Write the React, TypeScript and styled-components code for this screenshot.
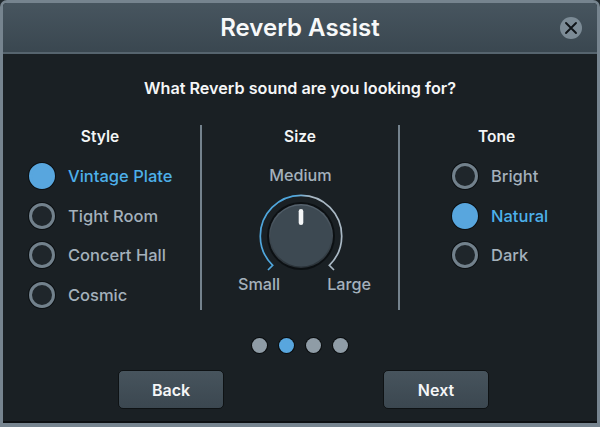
import { FC } from "react";
import styled, { createGlobalStyle } from "styled-components";

const STYLE_OPTIONS = ["Vintage Plate", "Tight Room", "Concert Hall", "Cosmic"];
const TONE_OPTIONS = ["Bright", "Natural", "Dark"];
const STEPS = [false, true, false, false];

const GlobalStyle = createGlobalStyle`
  html, body {
    margin: 0;
    padding: 0;
    background: #20282d;
  }
  body {
    font-family: Inter, "Liberation Sans", sans-serif;
  }
`;

const App = () => (
  <>
    <GlobalStyle />
    <Dialog>
      <Header>
        <Title>Reverb Assist</Title>
        <CloseButton aria-label="Close">
          <svg width="14" height="14" viewBox="0 0 14 14">
            <path d="M2 2 L12 12 M12 2 L2 12" stroke="#0f1418" strokeWidth="1.9" strokeLinecap="round" />
          </svg>
        </CloseButton>
      </Header>
      <Body>
        <Question>What Reverb sound are you looking for?</Question>
        <Columns>
          <div>
            <ColumnTitle $inset={3}>Style</ColumnTitle>
            <OptionList options={STYLE_OPTIONS} selected="Vintage Plate" indent={26} />
          </div>
          <CenterColumn>
            <ColumnTitle $inset={0}>Size</ColumnTitle>
            <MediumLabel>Medium</MediumLabel>
            <Knob />
            <KnobLabels>
              <SizeLabel>Small</SizeLabel>
              <SizeLabel>Large</SizeLabel>
            </KnobLabels>
          </CenterColumn>
          <div>
            <ColumnTitle $inset={4}>Tone</ColumnTitle>
            <OptionList options={TONE_OPTIONS} selected="Natural" indent={52} />
          </div>
        </Columns>
        <Dots>
          {STEPS.map((active, i) => (
            <Dot key={i} $active={active} />
          ))}
        </Dots>
        <Footer>
          <NavButton>Back</NavButton>
          <NavButton>Next</NavButton>
        </Footer>
      </Body>
    </Dialog>
  </>
);

interface OptionListProps {
  options: string[];
  selected: string;
  indent: number;
}

const OptionList: FC<OptionListProps> = ({ options, selected, indent }) => (
  <Options $indent={indent}>
    {options.map((option) => (
      <Option key={option}>
        <Radio $checked={option === selected} />
        <OptionLabel $checked={option === selected}>{option}</OptionLabel>
      </Option>
    ))}
  </Options>
);

const Knob = () => (
  <KnobDrawing width="100" height="91" viewBox="0 0 100 91">
    <defs>
      <linearGradient id="arcStroke" gradientUnits="userSpaceOnUse" x1="9" y1="0" x2="91" y2="0">
        <stop offset="0" stopColor="#4fa6dc" />
        <stop offset="0.42" stopColor="#4fa6dc" />
        <stop offset="0.62" stopColor="#a9b8c4" />
        <stop offset="1" stopColor="#a9b8c4" />
      </linearGradient>
      <linearGradient id="knobEdge" x1="0" y1="0" x2="0" y2="1">
        <stop offset="0" stopColor="#56636e" />
        <stop offset="1" stopColor="#2a3238" />
      </linearGradient>
    </defs>
    <path
      d="M17 84 L21.7 79.3 A40.7 40.7 0 1 1 78.3 79.3 L83 84"
      fill="none"
      stroke="url(#arcStroke)"
      strokeWidth="1.7"
    />
    <circle cx="50" cy="50" r="34" fill="#0c1013" />
    <circle cx="50" cy="50" r="32" fill="url(#knobEdge)" />
    <circle cx="50" cy="50" r="30.5" fill="#3d4952" />
    <rect x="47.7" y="23" width="4.6" height="16" rx="2.3" fill="#f4f6f7" />
  </KnobDrawing>
);

const Dialog = styled.div`
  width: 600px;
  height: 427px;
  box-sizing: border-box;
  display: flex;
  flex-direction: column;
  border: 3px solid #76848f;
  border-bottom-width: 4px;
  border-radius: 7px 7px 0 0;
  background: #1a2024;
  overflow: hidden;
`;

const Header = styled.header`
  position: relative;
  height: 51px;
  flex-shrink: 0;
  display: flex;
  align-items: center;
  justify-content: center;
  box-sizing: border-box;
  background: linear-gradient(#47555f, #3a4750);
  border-bottom: 2px solid #56646e;
`;

const Title = styled.h1`
  margin: 0;
  color: #f7f8f9;
  font-size: 24px;
  font-weight: 600;
  line-height: 1;
`;

const CloseButton = styled.button`
  position: absolute;
  top: 14px;
  right: 15px;
  width: 22px;
  height: 22px;
  padding: 0;
  display: flex;
  align-items: center;
  justify-content: center;
  border: none;
  border-radius: 50%;
  background: #7c8b96;
`;

const Body = styled.main`
  flex: 1;
  display: flex;
  flex-direction: column;
  padding-top: 25px;
  border-bottom: 2px solid #0c0f11;
`;

const Question = styled.p`
  margin: 0;
  height: 18px;
  line-height: 18px;
  text-align: center;
  color: #f5f6f7;
  font-size: 16.2px;
  font-weight: 600;
`;

const Columns = styled.section`
  margin-top: 28px;
  height: 185px;
  display: grid;
  grid-template-columns: 197px 200px 1fr;
`;

const CenterColumn = styled.div`
  display: flex;
  flex-direction: column;
  align-items: center;
  border-left: 2px solid #74828d;
  border-right: 2px solid #74828d;
`;

const ColumnTitle = styled.h2<{ $inset: number }>`
  margin: 3px 0 0;
  padding-right: ${({ $inset }) => $inset}px;
  height: 18px;
  line-height: 18px;
  color: #f3f5f6;
  font-size: 15.5px;
  font-weight: 600;
  text-align: center;
`;

const Options = styled.ul<{ $indent: number }>`
  list-style: none;
  margin: 17px 0 0;
  padding: 0 0 0 ${({ $indent }) => $indent}px;
  display: flex;
  flex-direction: column;
  gap: 13.7px;
`;

const Option = styled.li`
  display: flex;
  align-items: center;
  gap: 13px;
  height: 26px;
`;

const Radio = styled.span<{ $checked: boolean }>`
  width: 26px;
  height: 26px;
  box-sizing: border-box;
  flex-shrink: 0;
  border-radius: 50%;
  border: 3px solid ${({ $checked }) => ($checked ? "#58a6de" : "#72818c")};
  background: ${({ $checked }) => ($checked ? "#58a6de" : "#1f262b")};
  box-shadow: 0 0 0 1px #0c1013;
`;

const OptionLabel = styled.span<{ $checked: boolean }>`
  color: ${({ $checked }) => ($checked ? "#4db0ea" : "#a4b1bc")};
  font-size: 16.5px;
  font-weight: 500;
`;

const SizeLabel = styled.span`
  color: #a4b1bc;
  font-size: 16.2px;
  font-weight: 500;
  line-height: 18px;
`;

const MediumLabel = styled(SizeLabel)`
  margin: 20px 0 0 1px;
`;

const KnobDrawing = styled.svg`
  display: block;
  margin-top: 2px;
  margin-left: 1px;
`;

const KnobLabels = styled.div`
  width: 133px;
  margin: -2px 0 0 9px;
  display: flex;
  justify-content: space-between;
`;

const Dots = styled.div`
  margin-top: 27px;
  height: 16px;
  display: flex;
  justify-content: center;
  align-items: center;
  gap: 12px;
`;

const Dot = styled.span<{ $active: boolean }>`
  width: 15px;
  height: 15px;
  border-radius: 50%;
  background: ${({ $active }) => ($active ? "#58a6de" : "#8f9ca6")};
  box-shadow: 0 0 0 1px #0a0d0f;
`;

const Footer = styled.footer`
  margin-top: 17px;
  padding: 0 108px 0 115px;
  display: flex;
  justify-content: space-between;
`;

const NavButton = styled.button`
  width: 106px;
  height: 39px;
  padding: 0;
  border: 1px solid #0e1214;
  border-radius: 5px;
  background: linear-gradient(#47545d, #3b4750);
  color: #f5f6f7;
  font-family: inherit;
  font-size: 16px;
  font-weight: 600;
`;

export default App;
